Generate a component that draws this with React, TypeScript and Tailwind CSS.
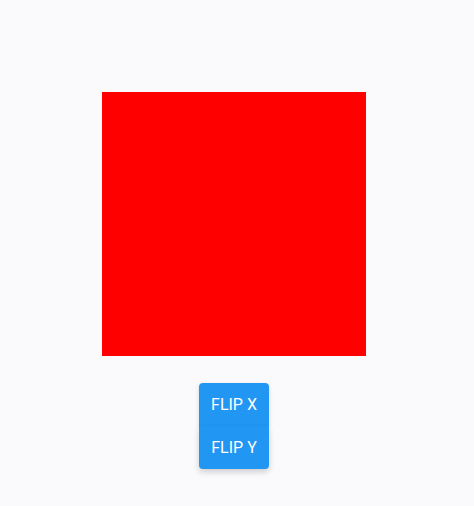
export default function App() {
  return (
    <div className="min-h-[506px] w-full bg-[#faf9fb] pt-[92px] font-['Roboto',sans-serif]">
      <div className="flex w-[468px] flex-col items-center">
        {/* Flipped square */}
        <div className="h-[264px] w-[264px] bg-[#ff0000]" />

        <div className="mt-[27px] flex flex-col">
          <button className="h-[43px] w-[70px] rounded-t bg-[#2196f3] text-[16px] text-white shadow-[0_2px_4px_rgba(0,0,0,0.16)]">
            FLIP X
          </button>
          <button className="h-[43px] w-[70px] rounded-b bg-[#2196f3] text-[16px] text-white shadow-[0_3px_6px_rgba(0,0,0,0.18)]">
            FLIP Y
          </button>
        </div>
      </div>
    </div>
  );
}
